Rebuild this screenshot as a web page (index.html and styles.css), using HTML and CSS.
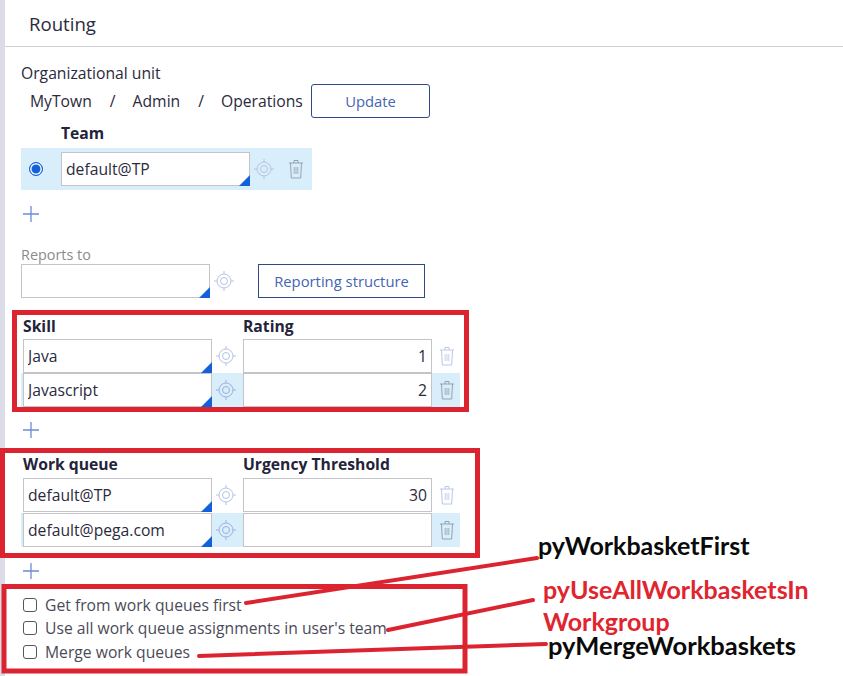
FILE: index.html
```html
<!DOCTYPE html>
<html lang="en">
<head>
    <meta charset="UTF-8">
    <title>Routing</title>
    <link rel="stylesheet" href="styles.css">
</head>
<body>
    <svg width="0" height="0" class="defs">
        <symbol id="target" viewBox="0 0 20 20">
            <circle cx="10" cy="10" r="7" fill="none" stroke="currentColor"/>
            <circle cx="10" cy="10" r="3.5" fill="none" stroke="currentColor"/>
            <path d="M10 0v3M10 17v3M0 10h3M17 10h3" stroke="currentColor"/>
        </symbol>
        <symbol id="trash" viewBox="0 0 16 20">
            <path d="M1 4h14M6 4V1.5h4V4M2.5 4l.8 15h9.4l.8-15" fill="none" stroke="currentColor"/>
            <path d="M6.2 8v7M8 8v7M9.8 8v7" stroke="currentColor" stroke-width=".8"/>
        </symbol>
        <symbol id="plus" viewBox="0 0 18 18">
            <path d="M9 1v16M1 9h16" stroke="currentColor" stroke-width="1.3"/>
        </symbol>
    </svg>

    <div class="page">
        <h1 class="title">Routing</h1>

        <div class="content">
            <div class="label">Organizational unit</div>
            <div class="org-row">
                <span class="org-path">MyTown<i>/</i>Admin<i>/</i>Operations</span>
                <button class="btn btn-update">Update</button>
            </div>

            <div class="col-title team-title">Team</div>
            <div class="team-row">
                <input type="radio" class="radio" checked>
                <div class="lookup"><input value="default@TP"></div>
                <svg class="icon-target team-target"><use href="#target"/></svg>
                <svg class="icon-trash team-trash"><use href="#trash"/></svg>
            </div>
            <svg class="icon-plus team-plus"><use href="#plus"/></svg>

            <div class="label label-muted">Reports to</div>
            <div class="reports-row">
                <div class="lookup"><input></div>
                <svg class="icon-target reports-target"><use href="#target"/></svg>
                <button class="btn btn-reports">Reporting structure</button>
            </div>

            <div class="table skills">
                <div class="table-head"><span>Skill</span><span>Rating</span></div>
                <div class="table-row">
                    <div class="lookup"><input value="Java"></div>
                    <span class="cell-target"><svg class="icon-target"><use href="#target"/></svg></span>
                    <input class="num" value="1">
                    <span class="cell-trash"><svg class="icon-trash"><use href="#trash"/></svg></span>
                </div>
                <div class="table-row selected">
                    <div class="lookup"><input value="Javascript"></div>
                    <span class="cell-target"><svg class="icon-target"><use href="#target"/></svg></span>
                    <input class="num" value="2">
                    <span class="cell-trash"><svg class="icon-trash"><use href="#trash"/></svg></span>
                </div>
            </div>
            <svg class="icon-plus table-plus"><use href="#plus"/></svg>

            <div class="table queues">
                <div class="table-head"><span>Work queue</span><span>Urgency Threshold</span></div>
                <div class="table-row">
                    <div class="lookup"><input value="default@TP"></div>
                    <span class="cell-target"><svg class="icon-target"><use href="#target"/></svg></span>
                    <input class="num" value="30">
                    <span class="cell-trash"><svg class="icon-trash"><use href="#trash"/></svg></span>
                </div>
                <div class="table-row selected">
                    <div class="lookup"><input value="default@pega.com"></div>
                    <span class="cell-target"><svg class="icon-target"><use href="#target"/></svg></span>
                    <input class="num">
                    <span class="cell-trash"><svg class="icon-trash"><use href="#trash"/></svg></span>
                </div>
            </div>
            <svg class="icon-plus queues-plus"><use href="#plus"/></svg>

            <div class="checks">
                <label class="check"><input type="checkbox">Get from work queues first</label>
                <label class="check"><input type="checkbox">Use all work queue assignments in user's team</label>
                <label class="check"><input type="checkbox">Merge work queues</label>
            </div>
        </div>
    </div>

    <!-- annotations drawn on top of the screenshot -->
    <svg class="marks" width="843" height="676">
        <g fill="none" stroke="#dc2430" stroke-width="5">
            <rect x="14.5" y="312.5" width="452" height="97"/>
            <rect x="2.5" y="450.5" width="475" height="105"/>
            <rect x="4" y="586.5" width="461" height="84.5"/>
        </g>
        <g fill="none" stroke="#dc2430" stroke-width="4" stroke-linecap="round">
            <path d="M246 603L537 558"/>
            <path d="M388 630L533 600"/>
            <path d="M199 656L546 644"/>
        </g>
    </svg>
    <div class="note note-first">pyWorkbasketFirst</div>
    <div class="note note-all"><span>pyUseAllWorkbasketsIn</span><span>Workgroup</span></div>
    <div class="note note-merge">pyMergeWorkbaskets</div>
</body>
</html>
```

FILE: styles.css
```css
* {
    box-sizing: border-box;
}

body {
    margin: 0;
    width: 843px;
    height: 676px;
    overflow: hidden;
    position: relative;
    background: #fff;
    font-family: "Open Sans", sans-serif;
    font-size: 15.7px;
    color: #2a2a3c;
}

.defs {
    position: absolute;
}

.page {
    height: 676px;
    border-left: 5px solid #dcdce8;
}

.title {
    margin: 0;
    height: 47px;
    padding: 11px 0 0 24px;
    font-size: 18.6px;
    line-height: 25px;
    font-weight: 400;
    border-bottom: 1px solid #cfcfd4;
}

.content {
    padding: 16px 0 0 16px;
}

.label {
    height: 21px;
    line-height: 20px;
}

.label-muted {
    height: 18px;
    font-size: 14.4px;
    line-height: 17px;
    color: #8a8a8f;
}

.org-row {
    display: flex;
    align-items: center;
    height: 34px;
}

.org-path {
    width: 290px;
    padding-left: 9px;
    white-space: nowrap;
}

.org-path i {
    font-style: normal;
    margin: 0 17px 0 18px;
}

.btn {
    height: 34px;
    background: #fff;
    font-family: inherit;
    font-size: 14.8px;
    color: #4464b4;
    padding: 0;
}

.btn-update {
    width: 119px;
    border: 1px solid #2f4a86;
    border-radius: 3px;
}

.btn-reports {
    width: 167px;
    margin-left: 24px;
    border: 1px solid #2f4a86;
}

.col-title,
.table-head span {
    font-weight: 700;
    font-size: 15.7px;
    color: #23233a;
}

.team-title {
    height: 30px;
    padding: 4px 0 0 40px;
    line-height: 22px;
}

.team-row {
    display: flex;
    align-items: center;
    width: 291px;
    height: 42px;
    padding-left: 8px;
    background: #d9eefb;
}

.radio {
    appearance: none;
    width: 14px;
    height: 14px;
    margin: 0 18px 0 0;
    border: 1.5px solid #1261d8;
    border-radius: 50%;
    background: #1261d8;
    box-shadow: inset 0 0 0 1.5px #fff;
}

.lookup {
    position: relative;
    width: 189px;
    height: 34px;
    flex: none;
}

.lookup input,
.num {
    width: 100%;
    height: 100%;
    margin: 0;
    border: 1px solid #c4c4c8;
    padding: 0 4px;
    font-family: inherit;
    font-size: 15.7px;
    color: #2a2a3c;
    background: #fff;
    outline: none;
}

.lookup::after {
    content: "";
    position: absolute;
    right: 0;
    bottom: 0;
    border-style: solid;
    border-width: 0 0 11px 11px;
    border-color: transparent transparent #1261d8 transparent;
}

.icon-target {
    width: 20px;
    height: 20px;
    flex: none;
    color: #b4c2e4;
}

.icon-trash {
    width: 16px;
    height: 20px;
    flex: none;
    color: #bcc6ea;
}

.icon-plus {
    display: block;
    width: 18px;
    height: 18px;
    color: #6f8bd8;
}

.team-target {
    margin-left: 4px;
}

.team-trash {
    margin-left: 14px;
    color: #93a3ad;
}

.team-plus {
    margin: 15px 0 23px 1px;
}

.reports-row {
    display: flex;
    align-items: center;
    height: 34px;
}

.reports-target {
    margin-left: 4px;
}

.table-head {
    display: flex;
    height: 23px;
    padding: 0 0 0 2px;
    line-height: 20px;
}

.table-head span:first-child {
    width: 220px;
}

.skills {
    margin-top: 18px;
}

.queues {
    margin-top: 13px;
}

.queues .table-head {
    height: 26px;
    line-height: 24px;
}

.table-row {
    display: flex;
    width: 439px;
    height: 34px;
    padding-left: 2px;
}

.queues .table-row.selected {
    margin-top: 1px;
}

.selected {
    background: linear-gradient(to right, #d9eefb 2px, transparent 2px, transparent 191px, #d9eefb 191px);
}

.selected .icon-target {
    color: #9db0dc;
}

.selected .icon-trash {
    color: #93a3ad;
}

.cell-target {
    width: 31px;
    display: flex;
    align-items: center;
    justify-content: center;
    padding-right: 3px;
}

.cell-trash {
    width: 28px;
    display: flex;
    align-items: center;
    justify-content: center;
    padding-left: 2px;
}

.num {
    width: 189px;
    flex: none;
    text-align: right;
}

.table-plus {
    margin: 14px 0 0 1px;
}

.queues-plus {
    margin: 15px 0 0 1px;
}

.checks {
    margin-top: 13px;
    padding-left: 2px;
}

.check {
    display: flex;
    align-items: center;
    height: 23.5px;
    color: #4b4b58;
}

.check input {
    appearance: none;
    width: 14px;
    height: 14px;
    margin: 0 8px 0 0;
    border: 1px solid #55555f;
    border-radius: 3px;
    background: #fff;
}

.marks {
    position: absolute;
    left: 0;
    top: 0;
}

.note {
    position: absolute;
    font-family: Lato, sans-serif;
    font-weight: 700;
    font-size: 25px;
    line-height: 24px;
    color: #0a0a0a;
    white-space: nowrap;
}

.note-first {
    left: 538px;
    top: 533px;
}

.note-all {
    left: 543px;
    top: 577px;
    color: #e0252f;
}

.note-all span {
    display: block;
}

.note-all span + span {
    margin-top: 8px;
}

.note-merge {
    left: 548px;
    top: 633px;
    font-size: 25.5px;
}
```
